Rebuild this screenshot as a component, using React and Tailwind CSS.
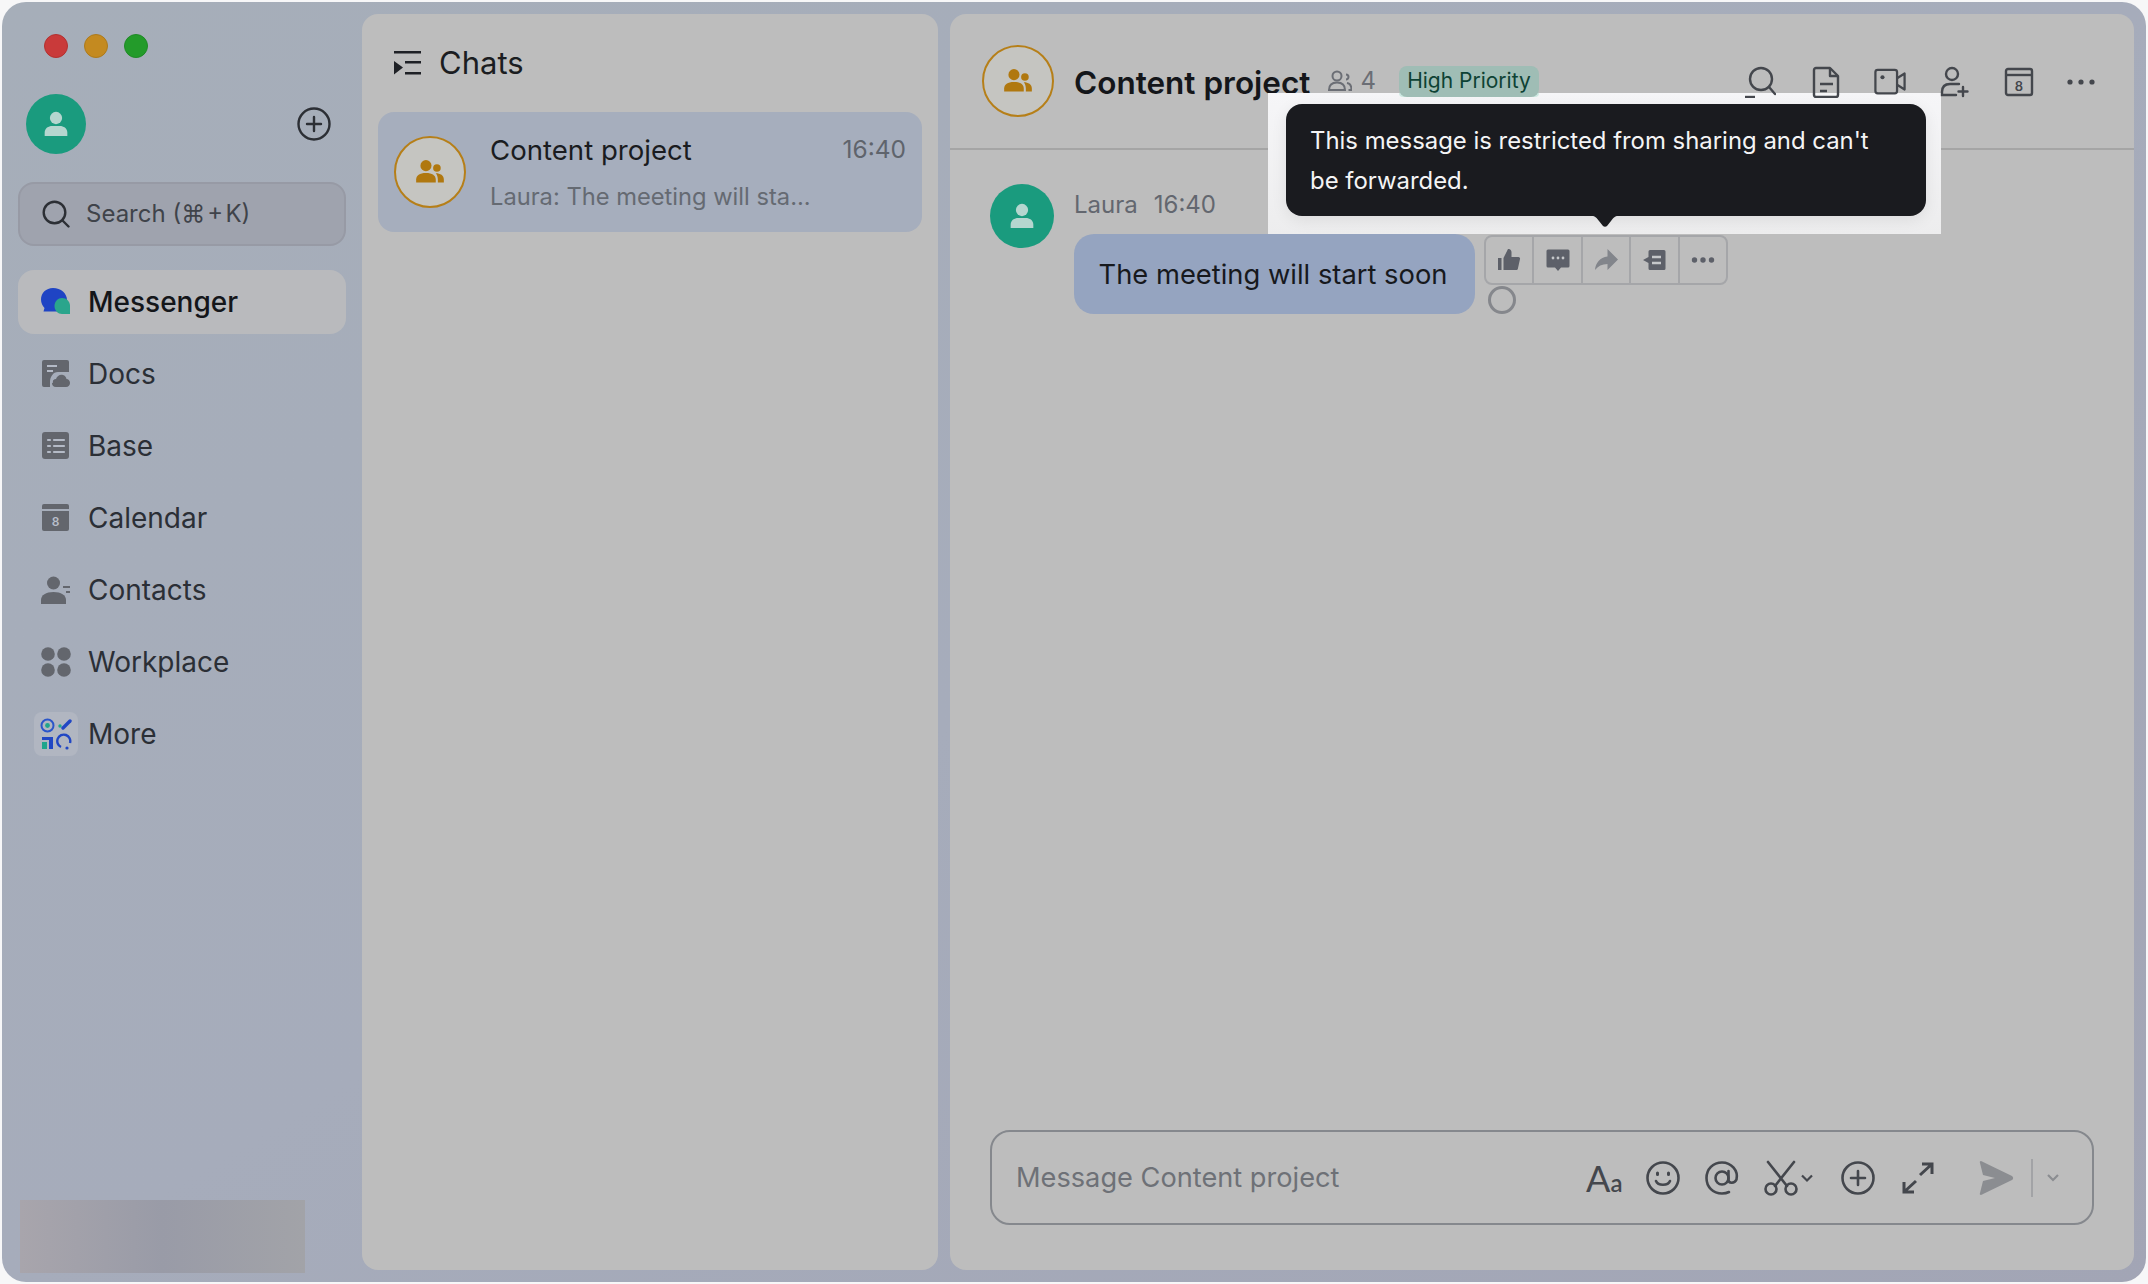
import React from 'react';

const font = { fontFamily: 'Inter, "Noto Sans", sans-serif' };

const UserGlyph = ({ className }) => (
  <svg className={className} viewBox="0 0 24 24" fill="currentColor">
    <circle cx="12" cy="7.5" r="4.6" />
    <path d="M3.5 21v-2.5C3.5 15 6.5 13.5 9 13.5h6c2.5 0 5.500 1.500 5.500 5V21z" />
  </svg>
);

const PeopleGlyph = ({ className }) => (
  <svg className={className} viewBox="0 0 26 24" fill="currentColor">
    <circle cx="9.500" cy="6.500" r="4.800" />
    <path d="M1 21v-2.500C1 15 4 12.800 9.500 12.800S18 15 18 18.500V21z" />
    <circle cx="19" cy="8.500" r="3.300" />
    <path d="M18 13c4 0 7 1.800 7 5.500V21h-5.200v-2.500c0-2.300-.7-4-1.800-5.500z" />
  </svg>
);

const GroupAvatar = ({ className }) => (
  <div className={`flex h-[72px] w-[72px] shrink-0 items-center justify-center rounded-full border-2 border-[#b67f18] bg-[#c5c5c1] text-[#b0780f] ${className || ''}`}>
    <PeopleGlyph className="h-7 w-[30px]" />
  </div>
);

const MessengerIcon = () => (
  <svg className="h-7 w-[30px]" viewBox="0 0 30 28">
    <path d="M13 0C6 0 1 5 1 11.500c0 3.500 1.500 6.500 3.500 8.500l-1 3.500H17c6 0 10-5 10-11.500S21 0 13 0z" fill="#1f44c4" />
    <path d="M22 10c-4 0-7.500 3.500-7.500 8s3.500 8 7.500 8h8v-8c0-4.500-3.500-8-8-8z" fill="#2aa58c" />
  </svg>
);

const DocsIcon = () => (
  <svg className="h-7 w-7" viewBox="0 0 28 28">
    <path d="M2 0h23a2 2 0 0 1 2 2v10H16c-5 0-8 5-8 10v5H2a2 2 0 0 1-2-2V2a2 2 0 0 1 2-2z" fill="#63666d" />
    <path d="M5 6h10M5 11h6" stroke="#b4bac6" strokeWidth="2" />
    <path d="M14 27c-3 0-4-2-4-4s2-4 4-4c1-3 4-5 7-4 2 .5 3 2 3.500 4 2 0 3.500 2 3.500 4s-1.500 4-4 4z" fill="#63666d" />
    <path d="M10 23c0-5 3-9 8-10" fill="none" stroke="#a6adbc" strokeWidth="1.500" />
  </svg>
);

const BaseIcon = () => (
  <svg className="h-7 w-7" viewBox="0 0 28 28">
    <rect width="27" height="27" rx="3" fill="#63666d" />
    <path d="M6 8h2M12 8h10M6 14h2M12 14h10M6 20h2M12 20h10" stroke="#b4bac6" strokeWidth="2.200" strokeLinecap="round" />
  </svg>
);

const CalendarIcon = () => (
  <svg className="h-7 w-7" viewBox="0 0 28 28">
    <path d="M2 0h23a2 2 0 0 1 2 2v3H0V2a2 2 0 0 1 2-2z" fill="#63666d" />
    <path d="M0 7h27v18a2 2 0 0 1-2 2H2a2 2 0 0 1-2-2z" fill="#63666d" />
    <text x="13.500" y="22" fontSize="12" fontWeight="600" textAnchor="middle" fill="#b9bfca" style={font}>8</text>
  </svg>
);

const ContactsIcon = () => (
  <svg className="h-7 w-[30px]" viewBox="0 0 30 28">
    <circle cx="12.500" cy="7" r="6.500" fill="#63666d" />
    <path d="M0 28v-4c0-5 5-8 12.500-8S25 19 25 24v4z" fill="#63666d" />
    <path d="M22 11h7M25 16h4" stroke="#63666d" strokeWidth="2.200" />
  </svg>
);

const WorkplaceIcon = () => (
  <svg className="h-[30px] w-[30px]" viewBox="0 0 30 30" fill="#63666d">
    <circle cx="7" cy="7" r="6.800" />
    <circle cx="23" cy="7" r="6.800" />
    <circle cx="7" cy="23" r="6.800" />
    <circle cx="23" cy="23" r="6.800" />
  </svg>
);

const MoreIcon = () => (
  <div className="flex h-11 w-11 items-center justify-center rounded-lg bg-[#b1b6c1]">
    <svg className="h-8 w-8" viewBox="0 0 32 32" fill="none">
      <circle cx="7.500" cy="7.500" r="6" stroke="#2a55c9" strokeWidth="2" />
      <circle cx="7.500" cy="7.500" r="2.400" fill="#1fa58c" />
      <circle cx="20" cy="8" r="1.700" fill="#1fa58c" />
      <path d="M23 10l7-7" stroke="#2147c4" strokeWidth="3.400" strokeLinecap="round" />
      <path d="M2 19h11v12H9V22H2z" fill="#2147c4" />
      <path d="M2 24h5v7H2z" fill="#1fa58c" />
      <path d="M21 29a6.500 6.500 0 1 1 9-4" stroke="#2147c4" strokeWidth="2.400" />
      <circle cx="27" cy="30" r="1.600" fill="#2147c4" />
    </svg>
  </div>
);

const navItems = [
  { label: 'Docs', icon: <DocsIcon /> },
  { label: 'Base', icon: <BaseIcon /> },
  { label: 'Calendar', icon: <CalendarIcon /> },
  { label: 'Contacts', icon: <ContactsIcon /> },
  { label: 'Workplace', icon: <WorkplaceIcon /> },
  { label: 'More', icon: <MoreIcon /> },
];

const Sidebar = () => (
  <aside className="flex w-[360px] shrink-0 flex-col px-4 pt-8">
    <div className="flex h-6 gap-4 pl-[26px]">
      <span className="h-6 w-6 rounded-full border border-[#b3302f] bg-[#c93a3a]" />
      <span className="h-6 w-6 rounded-full border border-[#ad7a1b] bg-[#c48a20]" />
      <span className="h-6 w-6 rounded-full border border-[#1f8a26] bg-[#239b2a]" />
    </div>
    <div className="mt-9 flex h-[60px] items-center justify-between pl-2 pr-[15px]">
      <div className="flex h-[60px] w-[60px] items-center justify-center rounded-full bg-[#1a9b7e] text-[#b5d6cf]">
        <UserGlyph className="h-8 w-8" />
      </div>
      <svg className="h-[34px] w-[34px]" viewBox="0 0 34 34" fill="none" stroke="#2c2f35" strokeWidth="2.400">
        <circle cx="17" cy="17" r="15.500" />
        <path d="M17 10v14M10 17h14" strokeLinecap="round" />
      </svg>
    </div>
    <div className="mt-7 flex h-16 items-center gap-4 rounded-2xl border-2 border-[#979aa5] bg-[#9fa3ae] pl-[22px]">
      <svg className="h-7 w-7" viewBox="0 0 28 28" fill="none" stroke="#2c2f35" strokeWidth="2.400">
        <circle cx="12.500" cy="12.500" r="10.800" />
        <path d="M20.500 20.500l6 6" strokeLinecap="round" />
      </svg>
      <span className="text-[24px] text-[#3f434a]">Search (⌘{'\u200a'}+{'\u200a'}K)</span>
    </div>
    <nav className="mt-6 flex flex-col gap-2">
      <div className="flex h-16 items-center gap-[18px] rounded-2xl bg-[#b9babd] pl-[22px]">
        <MessengerIcon />
        <span className="text-[28px] font-medium text-[#14161a]">Messenger</span>
      </div>
      {navItems.map((item) => (
        <div key={item.label} className="flex h-16 items-center pl-[6px]">
          <div className="flex w-16 items-center justify-center">{item.icon}</div>
          <span className="text-[28px] text-[#2b2f36]">{item.label}</span>
        </div>
      ))}
    </nav>
    <div className="mb-[9px] ml-[2px] mt-auto h-[73px] w-[285px] bg-gradient-to-r from-[#a8a5ac] via-[#999ba7] to-[#a2a3a8]" />
  </aside>
);

const ChatList = () => (
  <section className="my-3 flex w-[576px] shrink-0 flex-col rounded-2xl bg-[#bdbdbd] px-4">
    <div className="flex h-[98px] items-center gap-[18px] pl-4">
      <svg className="h-6 w-[27px]" viewBox="0 0 27 24" fill="#1f2126">
        <path d="M0 0h27v2.400H0zM11 10h16v2.400H11zM11 21h16v2.400H11zM0 10l9 6.500-9 7z" />
      </svg>
      <span className="text-[31px] text-[#1b1d21]">Chats</span>
    </div>
    <div className="flex h-[120px] items-center rounded-2xl bg-[#a6aebd] pl-4 pr-4">
      <GroupAvatar />
      <div className="ml-6 min-w-0 flex-1 pb-[1px]">
        <div className="flex items-center justify-between">
          <span className="text-[27.600px] leading-[38px] text-[#1a1c20]">Content project</span>
          <span className="text-[24.500px] text-[#5f646c]">16:40</span>
        </div>
        <div className="mt-3 text-[23.700px] leading-8 text-[#656a72]">Laura: The meeting will sta...</div>
      </div>
    </div>
  </section>
);

const HeaderIcons = () => (
  <div className="relative z-20 ml-auto mt-[2px] flex items-center gap-[33px] pr-[39px] text-[#44474d]">
    <svg className="h-8 w-8" viewBox="0 0 32 32" fill="none" stroke="currentColor" strokeWidth="2.400">
      <circle cx="17" cy="13" r="11" />
      <path d="M25 21l6 7" strokeLinecap="round" />
      <path d="M1 31h10" />
    </svg>
    <svg className="h-8 w-8" viewBox="-2 0 32 32" fill="none" stroke="currentColor" strokeWidth="2.400" strokeLinejoin="round">
      <path d="M5 2h14l8 8v19a2 2 0 0 1-2 2H5a2 2 0 0 1-2-2V4a2 2 0 0 1 2-2z" />
      <path d="M19 2v8h8M9 18h13M9 25h7" />
    </svg>
    <svg className="h-8 w-8" viewBox="0 0 34 32" fill="none" stroke="currentColor" strokeWidth="2.400" strokeLinejoin="round">
      <rect x="1.500" y="3" width="23" height="25" rx="2.500" />
      <path d="M24.500 12l8-5v17l-8-5" />
      <circle cx="9" cy="11" r="2.200" fill="currentColor" stroke="none" />
    </svg>
    <svg className="h-8 w-8" viewBox="0 0 32 32" fill="none" stroke="currentColor" strokeWidth="2.400" strokeLinecap="round">
      <circle cx="13" cy="8" r="6" />
      <path d="M20 18H11c-5 0-8 3-8 8v3h14M24 21v9M19.500 25.500h9" />
    </svg>
    <svg className="h-8 w-[30px]" viewBox="0 0 30 32" fill="none" stroke="currentColor" strokeWidth="2.400">
      <rect x="2" y="3" width="26" height="26" rx="2" />
      <path d="M2 9h26" />
      <text x="15" y="24.500" fontSize="13" fontWeight="600" textAnchor="middle" fill="currentColor" stroke="none" style={font}>8</text>
    </svg>
    <svg className="h-2 w-7" viewBox="0 0 28 8" fill="currentColor">
      <circle cx="3" cy="4" r="2.600" />
      <circle cx="14" cy="4" r="2.600" />
      <circle cx="25" cy="4" r="2.600" />
    </svg>
  </div>
);

const Tooltip = () => (
  <div className="absolute left-[318px] top-[79px] z-10 h-[141px] w-[673px] bg-gradient-to-b from-[#f6f6f8] to-[#ededee] pl-[18px] pt-[11px]">
    <div className="relative h-[112px] w-[640px] rounded-2xl bg-[#1a1b1f] pl-6 pt-[17px] text-[23.900px] leading-10 text-[#f4f4f5] shadow-[0_4px_16px_rgba(0,0,0,0.08)]">
      <div>This message is restricted from sharing and can&apos;t</div>
      <div>be forwarded.</div>
      <svg className="absolute left-[304px] top-[111px] h-3 w-[30px]" viewBox="0 0 30 12" fill="#1a1b1f">
        <path d="M0 0h30c-5 1-7 3-9 6l-4 5c-1 1-3 1-4 0L9 6C7 3 5 1 0 0z" />
      </svg>
    </div>
    <div className="absolute left-[131px] top-0 h-1 w-[140px] rounded-b-lg bg-[#cde9e2]" />
  </div>
);

const toolbarIcons = [
  <svg key="like" className="h-6 w-6" viewBox="0 0 24 24" fill="#5d6069">
    <path d="M1 10h3.500v12H1zM6.500 10L11 1c2-.5 3.500 1 3.500 3v5h7c1 0 1.800 1 1.500 2l-2.200 10c-.2.700-.8 1-1.500 1H6.500z" />
  </svg>,
  <svg key="reply" className="h-6 w-6" viewBox="0 0 24 24">
    <path d="M2 1.500h20a1.500 1.500 0 0 1 1.500 1.500v15a1.500 1.500 0 0 1-1.500 1.500h-7L12 23l-3-3.500H2A1.500 1.500 0 0 1 .5 18V3A1.500 1.500 0 0 1 2 1.500z" fill="#5d6069" />
    <circle cx="7" cy="10" r="1.400" fill="#c5c7ca" />
    <circle cx="12" cy="10" r="1.400" fill="#c5c7ca" />
    <circle cx="17" cy="10" r="1.400" fill="#c5c7ca" />
  </svg>,
  <svg key="forward" className="h-6 w-6" viewBox="0 0 24 24" fill="#82858b">
    <path d="M13.500 1L24 11.500 13.500 22v-6C8 16 4 18 1 22c.5-7 5-12.500 12.500-13.500z" />
  </svg>,
  <svg key="tag" className="h-6 w-6" viewBox="0 0 24 24">
    <path d="M8 2h14a1.500 1.500 0 0 1 1.500 1.500v17A1.500 1.500 0 0 1 22 22H8a1.500 1.500 0 0 1-1.500-1.500V15L1 12l5.500-3V3.500A1.500 1.500 0 0 1 8 2z" fill="#5d6069" />
    <path d="M10 9h9M10 15h9" stroke="#c5c7ca" strokeWidth="2.400" />
  </svg>,
  <svg key="more" className="h-2 w-6" viewBox="0 0 24 8" fill="#5d6069">
    <circle cx="3.500" cy="4" r="2.700" />
    <circle cx="12" cy="4" r="2.700" />
    <circle cx="20.500" cy="4" r="2.700" />
  </svg>,
];

const Message = () => (
  <div className="flex pl-10 pt-[34px]">
    <div className="flex h-16 w-16 shrink-0 items-center justify-center rounded-full bg-[#1a9b7e] text-[#b5d6cf]">
      <UserGlyph className="h-8 w-8" />
    </div>
    <div className="ml-5">
      <div className="mt-1 flex h-[34px] items-center gap-4 text-[24px] text-[#63676f]">
        <span>Laura</span>
        <span>16:40</span>
      </div>
      <div className="mt-3 flex items-start">
        <div className="flex h-20 w-[401px] items-center justify-center rounded-[20px] bg-[#95a4c0] pr-[3px] pt-[2px] text-[27.350px] text-[#17191d]">
          The meeting will start soon
        </div>
        <div className="ml-[9px] mt-[1px] flex flex-col">
          <div className="flex h-[50px] w-[244px] divide-x-2 divide-[#a5a6a9] rounded-lg border-2 border-[#a5a6a9]">
            {toolbarIcons.map((icon) => (
              <div key={icon.key} className="flex flex-1 items-center justify-center">{icon}</div>
            ))}
          </div>
          <span className="ml-1 mt-[1px] h-7 w-7 rounded-full border-[3px] border-[#85878c]" />
        </div>
      </div>
    </div>
  </div>
);

const Composer = () => (
  <div className="mb-[45px] ml-10 mr-10 mt-auto flex h-[95px] items-center rounded-[20px] border-2 border-[#85888d] pl-[24px] pr-[33px]">
    <span className="mt-[2px] text-[27.200px] text-[#6e7177]">Message Content project</span>
    <div className="ml-auto flex items-center text-[#44474d]">
      <span className="w-[38px] text-[36px] leading-none text-[#44474d]" style={{ fontFamily: 'Lato, sans-serif' }}>A<span className="text-[24px] font-semibold">a</span></span>
      <svg className="ml-[21px] h-9 w-9" viewBox="0 0 36 36" fill="none" stroke="currentColor" strokeWidth="2.600" strokeLinecap="round">
        <circle cx="18" cy="18" r="15.500" />
        <path d="M11 21c2 5 12 5 14 0" />
        <path d="M12.500 13v1.500M23.500 13v1.500" strokeWidth="3" />
      </svg>
      <svg className="ml-[23px] h-9 w-9" viewBox="0 0 36 36" fill="none" stroke="currentColor" strokeWidth="2.600" strokeLinecap="round">
        <circle cx="18" cy="18" r="6.500" />
        <path d="M24.500 11v9c0 3.500 6 4 8-.5 2-9-5-17-14.500-17C9 2.500 2.500 9 2.500 18S9 33.500 18 33.500c3 0 5-.5 7-1.500" />
      </svg>
      <svg className="ml-6 h-9 w-[34px]" viewBox="0 0 34 36" fill="none" stroke="currentColor" strokeWidth="2.600" strokeLinecap="round">
        <path d="M4 2l19 24M30 2L11 26" />
        <circle cx="7" cy="29" r="5.500" />
        <circle cx="27" cy="29" r="5.500" />
      </svg>
      <svg className="ml-[3px] h-3 w-3" viewBox="0 0 12 12" fill="none" stroke="currentColor" strokeWidth="2.200">
        <path d="M1 3.500l5 5 5-5" />
      </svg>
      <svg className="ml-[27px] h-9 w-9" viewBox="0 0 36 36" fill="none" stroke="currentColor" strokeWidth="2.600" strokeLinecap="round">
        <circle cx="18" cy="18" r="15.500" />
        <path d="M18 11v14M11 18h14" />
      </svg>
      <svg className="ml-[26px] h-8 w-8" viewBox="0 0 32 32" fill="none" stroke="currentColor" strokeWidth="3">
        <path d="M18 13L30 2M20 2h10v10M14 19L2 30M2 20v10h10" />
      </svg>
      <svg className="ml-[44px] h-9 w-9" viewBox="0 0 36 36" fill="#8b8d91">
        <path d="M3 1c-1 0-1.500.8-1 2l3 12 12 3-12 3-3 12c-.5 1.200 0 2 1 2l31-15c1.500-.7 1.500-3 0-4z" />
      </svg>
      <span className="ml-[17px] h-[38px] w-[2px] bg-[#a2a3a6]" />
      <svg className="ml-[14px] h-[10px] w-3" viewBox="0 0 12 10" fill="none" stroke="#8b8d91" strokeWidth="2.200">
        <path d="M1 2l5 5 5-5" />
      </svg>
    </div>
  </div>
);

const ChatPanel = () => (
  <section className="relative my-3 flex w-[1184px] shrink-0 flex-col rounded-2xl bg-[#bdbdbd]">
    <header className="flex h-[136px] shrink-0 items-center border-b-2 border-[#a5a5a5] pl-8">
      <GroupAvatar />
      <h1 className="ml-5 mt-[4px] text-[31.500px] font-semibold text-[#14161a]">Content project</h1>
      <svg className="ml-[18px] h-6 w-6 text-[#6b6e75]" viewBox="0 0 24 24" fill="none" stroke="currentColor" strokeWidth="2">
        <circle cx="9" cy="7" r="4.500" />
        <path d="M1 21c0-5 3-7.500 8-7.500s8 2.500 8 7.500zM18 5.500a2.500 2.500 0 1 1 0 5M19 14c3 .5 4.500 3 4.500 7h-3" />
      </svg>
      <span className="ml-2 text-[24px] text-[#6b6e75]">4</span>
      <div className="relative z-20 ml-[23px] flex h-[31px] w-[140px] items-center justify-center rounded-lg bg-[#9fbdb5] text-[21px] text-[#0e4234]">
        High Priority
      </div>
      <HeaderIcons />
    </header>
    <Message />
    <Composer />
    <Tooltip />
  </section>
);

export default function App() {
  return (
    <div className="h-[1284px] w-[2148px] overflow-hidden bg-[#f7f7f8] p-[2px]" style={font}>
      <div className="flex h-[1280px] w-[2144px] rounded-[24px] bg-gradient-to-br from-[#a6aeb9] via-[#a6acbb] to-[#a2a5b5]">
        <Sidebar />
        <ChatList />
        <div className="w-3 shrink-0" />
        <ChatPanel />
      </div>
    </div>
  );
}
